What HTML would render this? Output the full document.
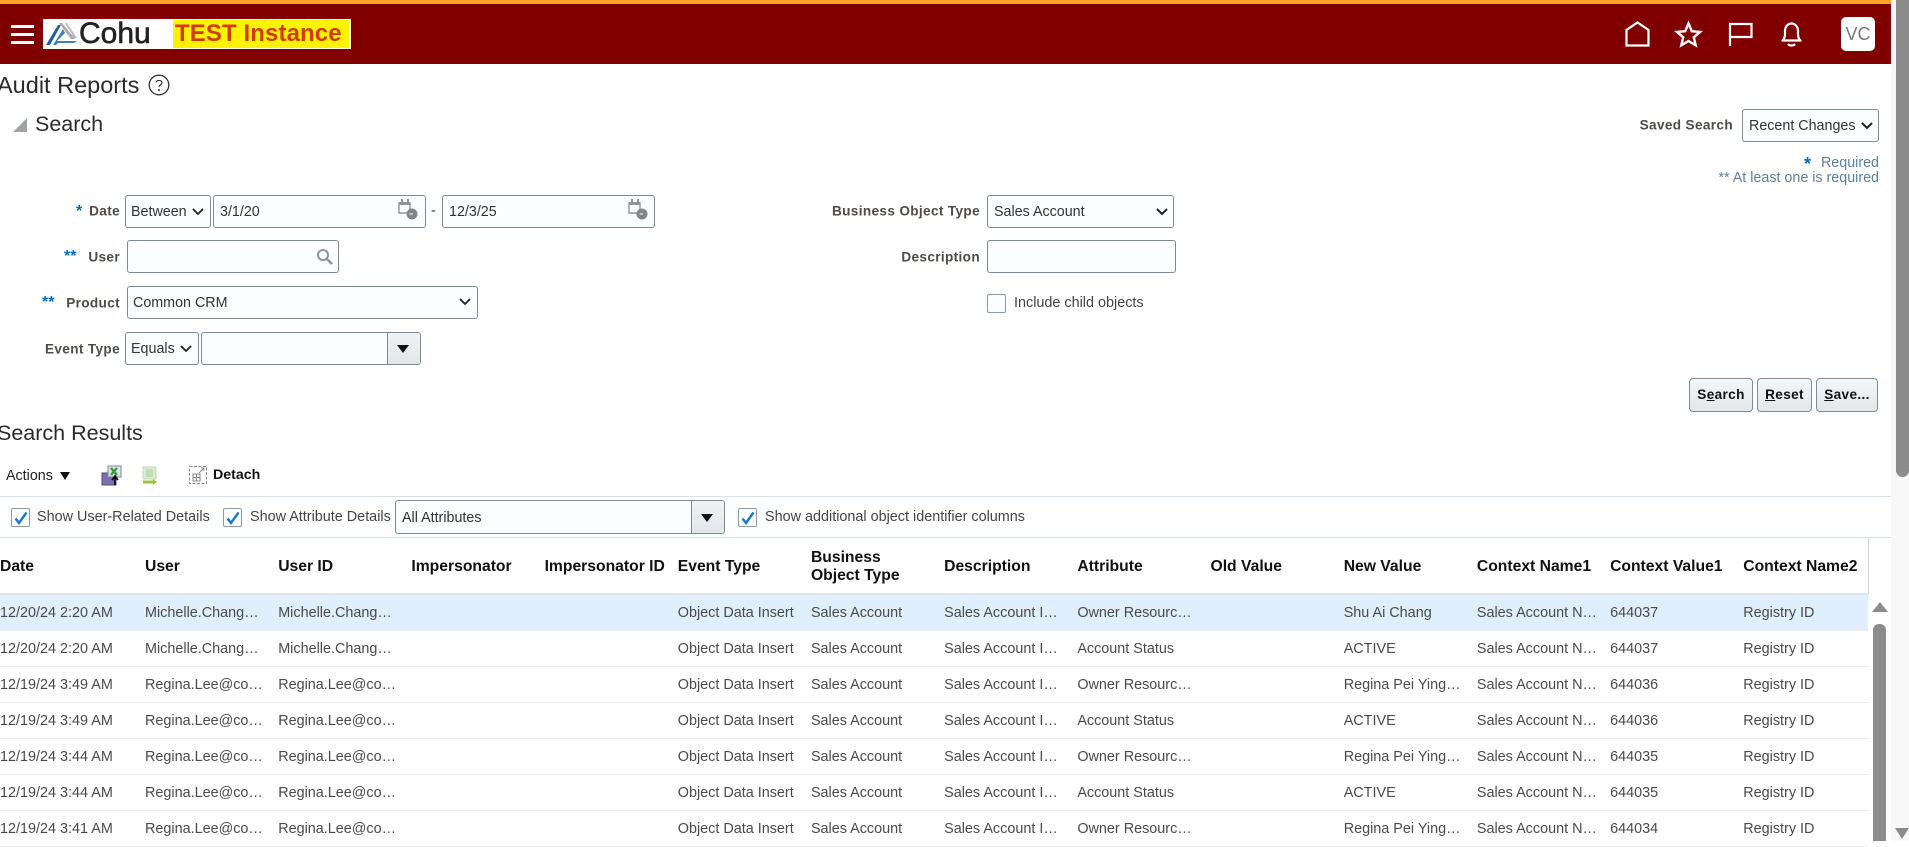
<!DOCTYPE html>
<html lang="en"><head><meta charset="utf-8"><title>Audit Reports</title>
<style>
html,body{margin:0;padding:0;width:1909px;height:841px;overflow:hidden;background:#fff;font-family:"Liberation Sans",sans-serif;font-size:14.3px;color:#333}
.a{position:absolute;white-space:nowrap}
.lbl{position:absolute;white-space:nowrap;font-weight:bold;color:#4f4b48;font-size:13.6px;letter-spacing:.35px;transform:translateY(-50%)}
.lbl.r{transform:translate(-100%,-50%)}
.box{position:absolute;box-sizing:border-box;background:#fbfdff;border:1px solid #7b8b98;border-radius:3px;line-height:32px;padding-left:6px;color:#333;white-space:nowrap;font-size:14.3px}
.req{position:absolute;color:#0a6ab5;font-weight:bold;font-size:16px;line-height:16px;white-space:nowrap}
.cb{position:absolute;box-sizing:border-box;width:19px;height:19px;background:#fbfdff;border:1px solid #8a9aa7;border-radius:2px}
.btn{position:absolute;box-sizing:border-box;top:378px;height:34px;border:1px solid #7b8b98;border-radius:4px;background:linear-gradient(#f4f6f7,#e3e7ea);font-weight:bold;color:#111;font-size:13.6px;letter-spacing:.35px;line-height:32px;text-align:center}
.arrow{position:absolute;box-sizing:border-box;background:linear-gradient(#f0f2f3,#e2e6e8);border-left:1px solid #7b8b98}
.tri{position:absolute;width:0;height:0;border-left:6px solid transparent;border-right:6px solid transparent;border-top:8px solid #111}
.row{position:absolute;left:0;width:1868px;display:grid;grid-template-columns:145px repeat(13,133.2px);box-sizing:border-box;border-bottom:1px solid #ebedef;color:#4a4a4a;font-size:14.4px;align-items:center}
.row div{white-space:nowrap;overflow:hidden}
.hdr{position:absolute;left:0;top:538px;width:1868px;height:57px;display:grid;grid-template-columns:145px repeat(13,133.2px);align-items:center;font-weight:bold;color:#111;font-size:15.7px;box-sizing:border-box}
.hdr div{line-height:18px;white-space:nowrap}
</style></head><body>
<div class="a" style="left:0;top:0;width:1891px;height:4px;background:#ffa629"></div>
<div class="a" style="left:0;top:4px;width:1891px;height:60px;background:#800000"></div>
<div class="a" style="left:1891px;top:0;width:18px;height:841px;background:#f8f8f8"></div>
<div class="a" style="left:1896px;top:0;width:13px;height:477px;background:#8c8c8c;border-radius:0 0 7px 7px"></div>
<div class="a" style="left:11px;top:25px;width:23px;height:3px;background:#fff"></div>
<div class="a" style="left:11px;top:33px;width:23px;height:3px;background:#fff"></div>
<div class="a" style="left:11px;top:41px;width:23px;height:3px;background:#fff"></div>
<div class="a" style="left:43px;top:19px;width:308px;height:30px;background:#fff;overflow:hidden">
<svg class="a" style="left:1px;top:2px" width="34" height="26" viewBox="0 0 34 26"><path d="M2 24 L14 4 L17 4 L6 24Z" fill="#1f5f9a"/><path d="M9 24 L19 8 L21 12 L13 20 L33 20 L30 22 L14 22 L12 24Z" fill="#3f80b5"/><path d="M15 2 L18 2 L31 18 L27 18Z" fill="#a8a8a8"/><path d="M21 2 L23 2 L33 17 L30 17Z" fill="#bcbcbc"/></svg>
<div class="a" style="left:36px;top:-3px;font-size:30px;line-height:36px;color:#222;-webkit-text-stroke:.6px #222">Cohu</div>
<div class="a" style="left:130px;top:1px;width:176px;height:28px;background:#fff200"></div>
<div class="a" style="left:132px;top:1px;font-size:24px;line-height:28px;font-weight:bold;color:#d33a0c;letter-spacing:.1px">TEST Instance</div>
</div>
<svg class="a" style="left:1622px;top:19px" width="31" height="30" viewBox="0 0 31 30"><path d="M4.5 26.5 V11 L15.5 3.5 L26.5 11 V26.5 Z" fill="none" stroke="#fff" stroke-width="2.2"/></svg>
<svg class="a" style="left:1673px;top:20px" width="31" height="28" viewBox="0 0 31 28"><path d="M15.5 3.5 L18.8 11.2 L27 11.9 L20.8 17.3 L22.7 25.3 L15.5 21 L8.3 25.3 L10.2 17.3 L4 11.9 L12.2 11.2 Z" fill="none" stroke="#fff" stroke-width="2.4" stroke-linejoin="miter"/></svg>
<svg class="a" style="left:1727px;top:21px" width="28" height="27" viewBox="0 0 28 27"><path d="M3 25 V3 H24.5 V16 H3" fill="none" stroke="#fff" stroke-width="2.2"/></svg>
<svg class="a" style="left:1779px;top:21px" width="26" height="27" viewBox="0 0 26 27"><path d="M3.5 19.5 C6.5 17 6 13 6 10 C6 5.5 9 2.5 12.5 2.5 C16 2.5 19 5.5 19 10 C19 13 18.5 17 21.5 19.5 Z" fill="none" stroke="#fff" stroke-width="2.2" stroke-linejoin="round"/><path d="M9 23 C10.5 25 14.5 25 16 23" fill="none" stroke="#fff" stroke-width="2.2"/></svg>
<div class="a" style="left:1841px;top:17px;width:34px;height:34px;background:#fff;border-radius:5px;color:#777;font-size:18px;line-height:34px;text-align:center">VC</div>

<div class="a" style="left:-3px;top:70px;font-size:23.5px;line-height:30px;color:#2b2b2b">Audit Reports</div>
<svg class="a" style="left:148px;top:74px" width="22" height="22" viewBox="0 0 22 22"><circle cx="11" cy="11" r="9.8" fill="none" stroke="#333" stroke-width="1.3"/><path d="M8 8.5 C8 6 14 5.5 14 8.7 C14 10.8 11 10.8 11 13" fill="none" stroke="#333" stroke-width="1.2"/><circle cx="11" cy="16" r="1" fill="#333"/></svg>
<svg class="a" style="left:13px;top:118px" width="14" height="14" viewBox="0 0 14 14"><path d="M14 0 V14 H0 Z" fill="#a0a4a8"/></svg>
<div class="a" style="left:35px;top:110px;font-size:21.5px;line-height:28px;color:#2b2b2b">Search</div>

<div class="lbl r" style="left:1733px;top:125px">Saved Search</div>
<div class="box" style="left:1742px;top:109px;width:137px;height:33px">Recent Changes</div>
<svg class="a" style="left:1860px;top:121px" width="14" height="10"><path d="M2 2 L7 7 L12 2" fill="none" stroke="#222" stroke-width="2"/></svg>
<div class="req" style="left:1804px;top:156px;font-size:18px">*</div>
<div class="a" style="right:30px;top:154px;line-height:18px;font-size:14.3px;color:#5f7f99">Required</div>
<div class="a" style="right:30px;top:170px;line-height:17px;font-size:14.3px;color:#5f7f99">** At least one is required</div>

<div class="req" style="left:76px;top:204px">*</div>
<div class="lbl r" style="left:120px;top:211px">Date</div>
<div class="box" style="left:125px;top:195px;width:86px;height:33px;padding-left:5px">Between</div>
<svg class="a" style="left:191px;top:207px" width="14" height="10"><path d="M2 2 L7 7 L12 2" fill="none" stroke="#222" stroke-width="1.8"/></svg>
<div class="box" style="left:213px;top:195px;width:213px;height:33px">3/1/20</div>
<svg class="a" style="left:397px;top:198px" width="22" height="24" viewBox="0 0 22 24"><path d="M2 5 H13 V15 H2 Z" fill="#fff" stroke="#8d9499" stroke-width="1.4"/><rect x="2" y="4" width="11" height="3" fill="#8d9499"/><rect x="4" y="1" width="2" height="4" fill="#8d9499"/><rect x="10" y="1" width="2" height="4" fill="#8d9499"/><circle cx="15" cy="16" r="5.5" fill="#7f8689"/><path d="M12.5 16 H16" stroke="#fff" stroke-width="1"/></svg>
<div class="a" style="left:431px;top:203px;line-height:17px">-</div>
<div class="box" style="left:442px;top:195px;width:213px;height:33px">12/3/25</div>
<svg class="a" style="left:627px;top:198px" width="22" height="24" viewBox="0 0 22 24"><path d="M2 5 H13 V15 H2 Z" fill="#fff" stroke="#8d9499" stroke-width="1.4"/><rect x="2" y="4" width="11" height="3" fill="#8d9499"/><rect x="4" y="1" width="2" height="4" fill="#8d9499"/><rect x="10" y="1" width="2" height="4" fill="#8d9499"/><circle cx="15" cy="16" r="5.5" fill="#7f8689"/><path d="M12.5 16 H16" stroke="#fff" stroke-width="1"/></svg>

<div class="req" style="left:64px;top:249px">**</div>
<div class="lbl r" style="left:120px;top:257px">User</div>
<div class="box" style="left:127px;top:240px;width:212px;height:33px"></div>
<svg class="a" style="left:316px;top:248px" width="18" height="18" viewBox="0 0 18 18"><circle cx="7" cy="7" r="5" fill="none" stroke="#8f9598" stroke-width="2"/><path d="M10.5 10.5 L16 16" stroke="#8f9598" stroke-width="2.6"/></svg>

<div class="req" style="left:42px;top:295px">**</div>
<div class="lbl r" style="left:120px;top:303px">Product</div>
<div class="box" style="left:127px;top:286px;width:351px;height:33px;padding-left:5px">Common CRM</div>
<svg class="a" style="left:458px;top:297px" width="14" height="10"><path d="M2 2 L7 7 L12 2" fill="none" stroke="#222" stroke-width="1.8"/></svg>

<div class="lbl r" style="left:120px;top:349px">Event Type</div>
<div class="box" style="left:125px;top:332px;width:74px;height:33px;padding-left:5px">Equals</div>
<svg class="a" style="left:179px;top:344px" width="14" height="10"><path d="M2 2 L7 7 L12 2" fill="none" stroke="#222" stroke-width="1.8"/></svg>
<div class="box" style="left:201px;top:332px;width:220px;height:33px;overflow:hidden"><div class="arrow" style="right:0;top:0;width:33px;height:31px"></div></div>
<div class="tri" style="left:397px;top:345px"></div>

<div class="lbl r" style="left:980px;top:211px">Business Object Type</div>
<div class="box" style="left:987px;top:195px;width:187px;height:33px">Sales Account</div>
<svg class="a" style="left:1155px;top:207px" width="14" height="10"><path d="M2 2 L7 7 L12 2" fill="none" stroke="#222" stroke-width="2"/></svg>
<div class="lbl r" style="left:980px;top:257px">Description</div>
<div class="box" style="left:987px;top:240px;width:189px;height:33px"></div>
<div class="cb" style="left:987px;top:294px"></div>
<div class="a" style="left:1014px;top:294px;font-size:14.4px;line-height:18px;color:#444">Include child objects</div>

<div class="btn" style="left:1689px;width:64px">S<u>e</u>arch</div>
<div class="btn" style="left:1757px;width:55px"><u>R</u>eset</div>
<div class="btn" style="left:1816px;width:62px"><u>S</u>ave...</div>

<div class="a" style="left:-3px;top:419px;font-size:21.5px;line-height:28px;color:#2b2b2b">Search Results</div>

<div class="a" style="left:6px;top:467px;line-height:18px;font-size:14.3px;color:#222">Actions</div>
<div class="tri" style="left:60px;top:472px;border-left-width:5.5px;border-right-width:5.5px"></div>
<svg class="a" style="left:100px;top:465px" width="22" height="22" viewBox="0 0 22 22"><rect x="2" y="8" width="14" height="12" fill="#7b6fb0" stroke="#504a86"/><rect x="8" y="1" width="13" height="11" fill="#dfe3e8" stroke="#7a8793"/><path d="M11 3 L17 10 M17 3 L11 10" stroke="#3a9a3a" stroke-width="2.4"/><path d="M15 20 V12 M12 15 L15 11 L18 15" stroke="#111" stroke-width="1.8" fill="none"/></svg>
<svg class="a" style="left:141px;top:466px" width="18" height="20" viewBox="0 0 18 20"><rect x="2" y="1" width="13" height="12" fill="#dcecd4" stroke="#c5d6c0"/><rect x="5" y="3" width="7" height="8" fill="#c3dcb8"/><path d="M2 16 H13" stroke="#9cc24a" stroke-width="3"/><path d="M12 13 L16 16 L12 19Z" fill="#9cc24a"/></svg>
<svg class="a" style="left:188px;top:465px" width="20" height="20" viewBox="0 0 20 20"><rect x="1.5" y="1.5" width="17" height="17" fill="none" stroke="#8a8a8a" stroke-dasharray="3 1.5"/><rect x="5" y="9" width="7" height="7" fill="none" stroke="#888"/><path d="M8.5 9 V16 M5 12.5 H12" stroke="#888"/><path d="M11 8 L16 3 M13 3 H16 V6" stroke="#888" fill="none"/></svg>
<div class="a" style="left:213px;top:466px;font-weight:bold;font-size:14.2px;line-height:18px;color:#111">Detach</div>
<div class="a" style="left:0;top:496px;width:1891px;height:1px;background:#d9e0e6"></div>
<div class="a" style="left:0;top:537px;width:1868px;height:1px;background:#d9e0e6"></div>
<div class="a" style="left:1868px;top:537px;width:1px;height:57px;background:#d0d5d9"></div>
<div class="a" style="left:1868px;top:537px;width:23px;height:1px;background:#d9e0e6"></div>

<div class="cb" style="left:11px;top:508px"></div>
<svg class="a" style="left:13px;top:510px" width="16" height="16" viewBox="0 0 16 16"><path d="M2.5 8.5 L6 13 L13.5 2.5" fill="none" stroke="#1a78c8" stroke-width="2.4"/></svg>
<div class="a" style="left:37px;top:508px;font-size:14.4px;line-height:18px;color:#444">Show User-Related Details</div>
<div class="cb" style="left:223px;top:508px"></div>
<svg class="a" style="left:225px;top:510px" width="16" height="16" viewBox="0 0 16 16"><path d="M2.5 8.5 L6 13 L13.5 2.5" fill="none" stroke="#1a78c8" stroke-width="2.4"/></svg>
<div class="a" style="left:250px;top:508px;font-size:14.4px;line-height:18px;color:#444">Show Attribute Details</div>
<div class="box" style="left:395px;top:500px;width:330px;height:34px;overflow:hidden;line-height:34px">All Attributes<div class="arrow" style="right:0;top:0;width:33px;height:32px"></div></div>
<div class="tri" style="left:701px;top:514px"></div>
<div class="cb" style="left:738px;top:508px"></div>
<svg class="a" style="left:740px;top:510px" width="16" height="16" viewBox="0 0 16 16"><path d="M2.5 8.5 L6 13 L13.5 2.5" fill="none" stroke="#1a78c8" stroke-width="2.4"/></svg>
<div class="a" style="left:765px;top:508px;font-size:14.4px;line-height:18px;color:#444">Show additional object identifier columns</div>

<div class="hdr">
<div>Date</div><div>User</div><div>User ID</div><div>Impersonator</div><div>Impersonator ID</div><div>Event Type</div><div>Business<br>Object Type</div><div>Description</div><div>Attribute</div><div>Old Value</div><div>New Value</div><div>Context Name1</div><div>Context Value1</div><div>Context Name2</div>
</div>
<div class="a" style="left:0;top:593px;width:1868px;height:2px;background:#dfe4e8"></div>

<div class="row" style="top:595px;height:36px;background:#e0effd"><div>12/20/24 2:20 AM</div><div>Michelle.Chang…</div><div>Michelle.Chang…</div><div></div><div></div><div>Object Data Insert</div><div>Sales Account</div><div>Sales Account I…</div><div>Owner Resourc…</div><div></div><div>Shu Ai Chang</div><div>Sales Account N…</div><div>644037</div><div>Registry ID</div></div>
<div class="row" style="top:631px;height:36px"><div>12/20/24 2:20 AM</div><div>Michelle.Chang…</div><div>Michelle.Chang…</div><div></div><div></div><div>Object Data Insert</div><div>Sales Account</div><div>Sales Account I…</div><div>Account Status</div><div></div><div>ACTIVE</div><div>Sales Account N…</div><div>644037</div><div>Registry ID</div></div>
<div class="row" style="top:667px;height:36px;padding-top:1px"><div>12/19/24 3:49 AM</div><div>Regina.Lee@co…</div><div>Regina.Lee@co…</div><div></div><div></div><div>Object Data Insert</div><div>Sales Account</div><div>Sales Account I…</div><div>Owner Resourc…</div><div></div><div>Regina Pei Ying…</div><div>Sales Account N…</div><div>644036</div><div>Registry ID</div></div>
<div class="row" style="top:703px;height:36px;padding-top:1px"><div>12/19/24 3:49 AM</div><div>Regina.Lee@co…</div><div>Regina.Lee@co…</div><div></div><div></div><div>Object Data Insert</div><div>Sales Account</div><div>Sales Account I…</div><div>Account Status</div><div></div><div>ACTIVE</div><div>Sales Account N…</div><div>644036</div><div>Registry ID</div></div>
<div class="row" style="top:739px;height:36px;padding-top:1px"><div>12/19/24 3:44 AM</div><div>Regina.Lee@co…</div><div>Regina.Lee@co…</div><div></div><div></div><div>Object Data Insert</div><div>Sales Account</div><div>Sales Account I…</div><div>Owner Resourc…</div><div></div><div>Regina Pei Ying…</div><div>Sales Account N…</div><div>644035</div><div>Registry ID</div></div>
<div class="row" style="top:775px;height:36px"><div>12/19/24 3:44 AM</div><div>Regina.Lee@co…</div><div>Regina.Lee@co…</div><div></div><div></div><div>Object Data Insert</div><div>Sales Account</div><div>Sales Account I…</div><div>Account Status</div><div></div><div>ACTIVE</div><div>Sales Account N…</div><div>644035</div><div>Registry ID</div></div>
<div class="row" style="top:811px;height:36px"><div>12/19/24 3:41 AM</div><div>Regina.Lee@co…</div><div>Regina.Lee@co…</div><div></div><div></div><div>Object Data Insert</div><div>Sales Account</div><div>Sales Account I…</div><div>Owner Resourc…</div><div></div><div>Regina Pei Ying…</div><div>Sales Account N…</div><div>644034</div><div>Registry ID</div></div>

<svg class="a" style="left:1872px;top:601px" width="16" height="12"><path d="M0 11 L8 1 L16 11Z" fill="#8c8c8c"/></svg>
<div class="a" style="left:1873px;top:624px;width:13px;height:217px;background:#8c8c8c;border-radius:6px 6px 0 0"></div>
<svg class="a" style="left:1895px;top:828px" width="14" height="11"><path d="M0 0 H14 L7 11Z" fill="#8c8c8c"/></svg>
</body></html>
